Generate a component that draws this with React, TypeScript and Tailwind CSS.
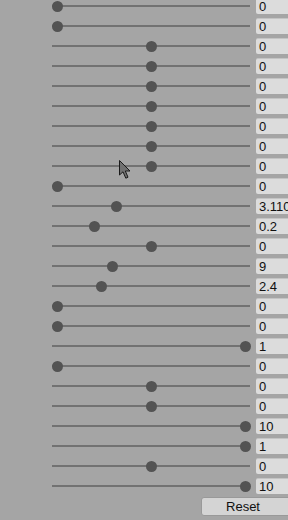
import React from "react";

const rows: { f: number; v: string }[] = [
  { f: 0, v: "0" },
  { f: 0, v: "0" },
  { f: 0.5, v: "0" },
  { f: 0.5, v: "0" },
  { f: 0.5, v: "0" },
  { f: 0.5, v: "0" },
  { f: 0.5, v: "0" },
  { f: 0.5, v: "0" },
  { f: 0.5, v: "0" },
  { f: 0, v: "0" },
  { f: 0.314, v: "3.110" },
  { f: 0.202, v: "0.2" },
  { f: 0.5, v: "0" },
  { f: 0.296, v: "9" },
  { f: 0.238, v: "2.4" },
  { f: 0, v: "0" },
  { f: 0, v: "0" },
  { f: 1, v: "1" },
  { f: 0, v: "0" },
  { f: 0.5, v: "0" },
  { f: 0.5, v: "0" },
  { f: 1, v: "10" },
  { f: 1, v: "1" },
  { f: 0.5, v: "0" },
  { f: 1, v: "10" },
];

function Row({ f, v }: { f: number; v: string }) {
  return (
    <div className="flex h-[20px] items-center">
      <div className="relative ml-[52px] flex h-[20px] w-[198px] shrink-0 items-center">
        <div className="h-[2px] w-full bg-[#727272]" />
        <div
          className="absolute top-[4.5px] h-[11px] w-[11px] rounded-full bg-[#535353]"
          style={{ left: `${f * 188 - 0.5}px` }}
        />
      </div>
      <div className="ml-[6px] flex h-[16px] w-[40px] shrink-0 items-center rounded-[2px] border-t border-[#c4c4c4] bg-[#dcdcdc] pl-[3px] text-[13px] leading-none text-[#101010]">
        {v}
      </div>
    </div>
  );
}

export default function App() {
  return (
    <div
      className="relative h-[520px] w-[288px] overflow-hidden bg-[#a5a5a5]"
      style={{ fontFamily: '"Liberation Sans", Arial, sans-serif' }}
    >
      <div className="-mt-[4px] flex flex-col">
        {rows.map((r, i) => (
          <Row key={i} f={r.f} v={r.v} />
        ))}
        <div className="mt-[1px] flex">
          <div className="ml-[201px] flex h-[19px] w-[92px] shrink-0 items-center justify-center rounded-[3px] border border-[#999] bg-[#d4d4d4] pr-[8px] text-[13px] text-[#111]">
            Reset
          </div>
        </div>
      </div>
      <svg
        className="absolute left-[119px] top-[160px]"
        width="13"
        height="20"
        viewBox="0 0 13 20"
      >
        <path
          d="M0.5 0.5 L0.5 15 L4 11.8 L6.8 18.2 L9 17.2 L6.3 11 L11 11 Z"
          fill="#707070"
          stroke="#1a1a1a"
          strokeWidth="1"
          strokeLinejoin="round"
        />
      </svg>
    </div>
  );
}
